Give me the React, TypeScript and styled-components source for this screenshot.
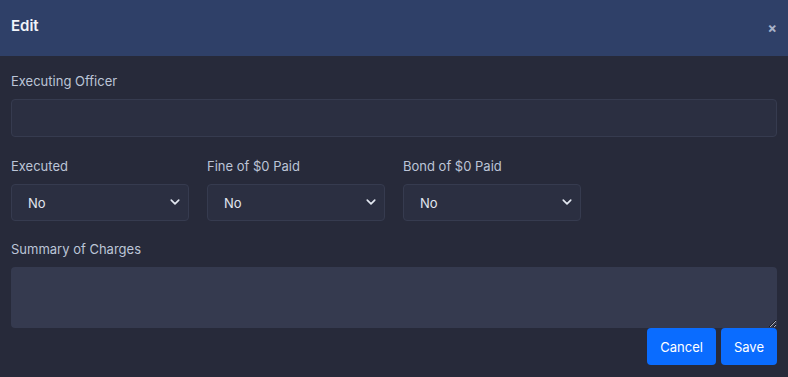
import React from "react";
import styled, { createGlobalStyle } from "styled-components";

const GlobalStyle = createGlobalStyle`
  html, body {
    margin: 0;
    padding: 0;
    background: #272a3a;
  }
  * { box-sizing: border-box; }
`;

const Modal = styled.div`
  width: 788px;
  height: 377px;
  background: #272a3a;
  font-family: Inter, "Liberation Sans", sans-serif;
  display: flex;
  flex-direction: column;
  overflow: hidden;
`;

const Header = styled.div`
  height: 56px;
  background: #2f4068;
  display: flex;
  align-items: center;
  justify-content: space-between;
  padding: 0 11px 5px;
  flex-shrink: 0;
`;

const Title = styled.h5`
  margin: 0;
  font-size: 15px;
  font-weight: 600;
  color: #f1f4fa;
`;

const Close = styled.button`
  background: none;
  border: 0;
  padding: 0;
  margin-right: 0;
  margin-top: 5px;
  color: #a9b3c9;
  font-family: Inter, "Liberation Sans", sans-serif;
  font-weight: 700;
  font-size: 14px;
  line-height: 1;
  cursor: pointer;
`;

const Body = styled.div`
  padding: 16px 11px 0;
  display: flex;
  flex-direction: column;
`;

const Field = styled.div<{ $width?: string }>`
  display: flex;
  flex-direction: column;
  width: ${(p) => p.$width || "100%"};
`;

const Label = styled.label`
  font-size: 13px;
  color: #bcc5d7;
  line-height: 18px;
  margin-bottom: 9px;
`;

const TextInput = styled.input`
  height: 38px;
  width: 100%;
  background: #2b2f41;
  border: 1px solid #363b4f;
  border-radius: 4px;
  color: #dde3ee;
  margin-bottom: 20px;
`;

const Row = styled.div`
  display: flex;
  gap: 18px;
  margin-bottom: 19px;
`;

const SelectWrap = styled.div`
  position: relative;
  height: 37px;
`;

const Select = styled.select`
  appearance: none;
  width: 100%;
  height: 37px;
  background: #2b2f41;
  border: 1px solid #363b4f;
  border-radius: 4px;
  color: #e2e7f0;
  font-family: Inter, "Liberation Sans", sans-serif;
  font-size: 13px;
  padding: 0 16px;
`;

const Chevron = styled.svg`
  position: absolute;
  right: 8px;
  top: 12px;
  pointer-events: none;
`;

const TextArea = styled.textarea`
  width: 100%;
  height: 61px;
  background: #353a4f;
  border: 0;
  border-radius: 4px;
  color: #dde3ee;
  display: block;
  resize: vertical;
`;

const Footer = styled.div`
  display: flex;
  justify-content: flex-end;
  gap: 5px;
  padding: 0 11px;
`;

const Button = styled.button`
  height: 37px;
  padding: 0 13px;
  background: #0a6cff;
  border: 0;
  border-radius: 4px;
  color: #ffffff;
  font-family: Inter, "Liberation Sans", sans-serif;
  font-size: 13px;
`;

const options = ["Executed", "Fine of $0 Paid", "Bond of $0 Paid"];

const App = () => {
  return (
    <>
      <GlobalStyle />
      <Modal>
        <Header>
          <Title>Edit</Title>
          <Close>×</Close>
        </Header>
        <Body>
          <Field>
            <Label>Executing Officer</Label>
            <TextInput />
          </Field>
          <Row>
            {options.map((o) => (
              <Field key={o} $width="178px">
                <Label>{o}</Label>
                <SelectWrap>
                  <Select defaultValue="No">
                    <option>No</option>
                    <option>Yes</option>
                  </Select>
                  <Chevron width="12" height="12" viewBox="0 0 16 16">
                    <path
                      d="M3 5.5l5 5 5-5"
                      fill="none"
                      stroke="#e2e7f0"
                      strokeWidth="2.2"
                      strokeLinecap="round"
                      strokeLinejoin="round"
                    />
                  </Chevron>
                </SelectWrap>
              </Field>
            ))}
          </Row>
          <Field>
            <Label>Summary of Charges</Label>
            <TextArea />
          </Field>
        </Body>
        <Footer>
          <Button>Cancel</Button>
          <Button>Save</Button>
        </Footer>
      </Modal>
    </>
  );
};

export default App;
